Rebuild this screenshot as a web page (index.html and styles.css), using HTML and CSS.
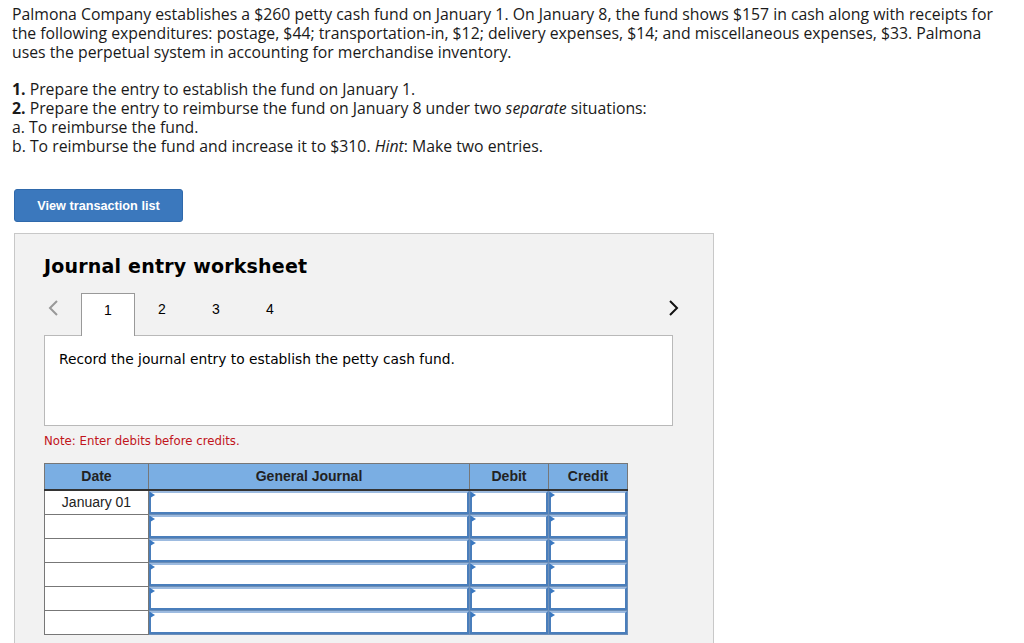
FILE: index.html
```html
<!DOCTYPE html>
<html lang="en">
<head>
    <meta charset="UTF-8">
    <title>Journal entry worksheet</title>
    <link rel="stylesheet" href="styles.css">
</head>
<body>
    <div class="question">
        <p>Palmona Company establishes a $260 petty cash fund on January 1. On January 8, the fund shows $157 in cash along with receipts for the following expenditures: postage, $44; transportation-in, $12; delivery expenses, $14; and miscellaneous expenses, $33. Palmona uses the perpetual system in accounting for merchandise inventory.</p>
        <p class="parts">
            <b>1.</b> Prepare the entry to establish the fund on January 1.<br>
            <b>2.</b> Prepare the entry to reimburse the fund on January 8 under two <i>separate</i> situations:<br>
            a. To reimburse the fund.<br>
            b. To reimburse the fund and increase it to $310. <i>Hint</i>: Make two entries.
        </p>
    </div>

    <button class="btn-list" type="button">View transaction list</button>

    <div class="worksheet">
        <h2>Journal entry worksheet</h2>

        <div class="tabs">
            <span class="arrow prev">
                <svg width="12" height="18" viewBox="0 0 12 18"><path d="M10 2 L3 9 L10 16" fill="none" stroke="#999" stroke-width="2"/></svg>
            </span>
            <span class="tab active">1</span>
            <span class="tab">2</span>
            <span class="tab">3</span>
            <span class="tab">4</span>
            <span class="arrow next">
                <svg width="12" height="18" viewBox="0 0 12 18"><path d="M2 2 L9 9 L2 16" fill="none" stroke="#111" stroke-width="2"/></svg>
            </span>
        </div>

        <div class="tab-body">
            <p>Record the journal entry to establish the petty cash fund.</p>
        </div>

        <p class="note">Note: Enter debits before credits.</p>

        <table class="journal">
            <thead>
                <tr>
                    <th class="c-date">Date</th>
                    <th class="c-acct">General Journal</th>
                    <th class="c-num">Debit</th>
                    <th class="c-num">Credit</th>
                </tr>
            </thead>
            <tbody>
                <tr><td class="date">January 01</td><td class="cell"><div class="field"></div></td><td class="cell"><div class="field"></div></td><td class="cell"><div class="field"></div></td></tr>
                <tr><td class="date"></td><td class="cell"><div class="field"></div></td><td class="cell"><div class="field"></div></td><td class="cell"><div class="field"></div></td></tr>
                <tr><td class="date"></td><td class="cell"><div class="field"></div></td><td class="cell"><div class="field"></div></td><td class="cell"><div class="field"></div></td></tr>
                <tr><td class="date"></td><td class="cell"><div class="field"></div></td><td class="cell"><div class="field"></div></td><td class="cell"><div class="field"></div></td></tr>
                <tr><td class="date"></td><td class="cell"><div class="field"></div></td><td class="cell"><div class="field"></div></td><td class="cell"><div class="field"></div></td></tr>
                <tr><td class="date"></td><td class="cell"><div class="field"></div></td><td class="cell"><div class="field"></div></td><td class="cell"><div class="field"></div></td></tr>
            </tbody>
        </table>
    </div>
</body>
</html>
```

FILE: styles.css
```css
* {
    margin: 0;
    padding: 0;
    box-sizing: border-box;
}
body {
    font-family: 'Open Sans', 'Liberation Sans', sans-serif;
    color: #1a1a1a;
    background: #fff;
    padding: 5px 12px 0 12px;
    overflow: hidden;
}
.question p {
    font-size: 15.8px;
    line-height: 19px;
}
.question .parts {
    margin-top: 18px;
}
.btn-list {
    display: block;
    margin: 33px 0 0 2px;
    width: 169px;
    height: 33px;
    background: #3b78bd;
    border: 1px solid #2f69ab;
    border-radius: 3px;
    color: #fff;
    font-family: 'Liberation Sans', Arial, sans-serif;
    font-weight: bold;
    font-size: 12.7px;
}
.worksheet {
    margin: 11px 0 0 2px;
    width: 700px;
    height: 420px;
    background: #f2f2f2;
    border: 1px solid #c8c8c8;
    padding: 21px 29px 0 29px;
}
.worksheet h2 {
    font-family: 'DejaVu Sans', Verdana, sans-serif;
    font-size: 19px;
    letter-spacing: 0.2px;
    font-weight: bold;
    color: #000;
    line-height: 22px;
}
.tabs {
    display: flex;
    align-items: flex-end;
    margin-top: 15px;
    height: 43px;
    position: relative;
}
.tab {
    width: 54px;
    height: 42px;
    font-family: 'Liberation Sans', Arial, sans-serif;
    font-size: 14px;
    text-align: center;
    padding-top: 8px;
    color: #000;
}
.tab.active {
    background: #fff;
    border: 1px solid #999;
    border-bottom: none;
    height: 43px;
    margin-bottom: -1px;
    position: relative;
    z-index: 1;
}
.arrow {
    align-self: flex-start;
    padding-top: 7px;
}
.arrow.prev {
    width: 37px;
    padding-left: 3px;
}
.arrow.next {
    margin-left: auto;
    margin-right: 4px;
}
.tab-body {
    width: 629px;
    height: 91px;
    background: #fff;
    border: 1px solid #b9b9b9;
    padding: 15px 14px;
}
.tab-body p {
    font-family: 'DejaVu Sans', Verdana, sans-serif;
    font-size: 13.8px;
    color: #000;
}
.note {
    margin-top: 8px;
    font-family: 'DejaVu Sans', Verdana, sans-serif;
    font-size: 11.75px;
    color: #c1141b;
}
.journal {
    margin-top: 15px;
    border-collapse: collapse;
    font-family: 'Liberation Sans', Arial, sans-serif;
    font-size: 14px;
}
.journal th {
    background: #7aaee3;
    color: #222;
    height: 26px;
    border: 1px solid #777;
    border-bottom: 2px solid #333;
    font-weight: bold;
}
.journal .c-date { width: 104px; }
.journal .c-acct { width: 321px; }
.journal .c-num { width: 79px; }
.journal td {
    height: 24px;
    border: 1px solid #777;
    background: #fff;
}
.journal td.date {
    text-align: center;
    color: #222;
}
.journal td.cell {
    padding: 0;
    border-color: #6d8fb8;
}
.field {
    position: relative;
    height: 23px;
    border: 2px solid #4a7ebb;
    border-top-color: #9dbbe0;
    background: #fff;
}
.field::before {
    content: "";
    position: absolute;
    left: -1px;
    top: -1px;
    border-left: 5px solid #3a78c0;
    border-top: 3px solid transparent;
    border-bottom: 3px solid transparent;
}
```
